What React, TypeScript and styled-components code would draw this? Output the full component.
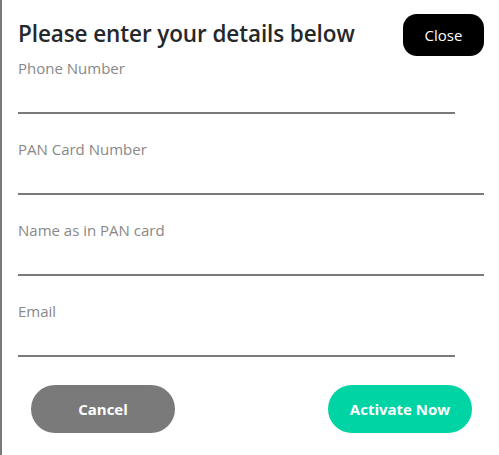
import React from 'react';
import styled, { createGlobalStyle } from 'styled-components';

const GlobalStyle = createGlobalStyle`
  html, body {
    margin: 0;
    padding: 0;
    background: #ffffff;
  }
  body {
    font-family: "Segoe UI", "Open Sans", "Noto Sans", sans-serif;
  }
`;

const Dialog = styled.div`
  box-sizing: border-box;
  width: 499px;
  height: 455px;
  border-left: 2px solid #7a7a7a;
  padding: 14px 15px 0 16px;
  background: #fff;
`;

const Header = styled.div`
  display: flex;
  align-items: center;
  justify-content: space-between;
  height: 42px;
`;

const Title = styled.h2`
  margin: 0 0 4px 0;
  font-size: 22.5px;
  font-weight: 600;
  color: #25282b;
  letter-spacing: -0.1px;
`;

const CloseButton = styled.button`
  width: 81px;
  height: 42px;
  border: none;
  border-radius: 14px;
  background: #000;
  color: #fff;
  font-family: inherit;
  font-size: 15px;
  padding: 0;
  cursor: pointer;
`;

const Form = styled.div`
  display: flex;
  flex-direction: column;
  gap: 25px;
  margin-top: 2px;
`;

const Field = styled.label<{ $wide?: boolean }>`
  display: flex;
  flex-direction: column;
  width: ${p => (p.$wide ? '466px' : '437px')};
`;

const Label = styled.span`
  font-size: 15px;
  line-height: 20px;
  color: #888888;
`;

const Input = styled.input`
  box-sizing: border-box;
  height: 36px;
  border: none;
  border-bottom: 2px solid #7a7a7a;
  outline: none;
  background: transparent;
  font-family: inherit;
  font-size: 15px;
  padding: 0;
`;

const Actions = styled.div`
  display: flex;
  justify-content: space-between;
  padding: 0 12px 0 13px;
  margin-top: 28px;
`;

const PillButton = styled.button<{ $tone: 'grey' | 'green' }>`
  width: 144px;
  height: 48px;
  border: none;
  border-radius: 24px;
  background: ${p => (p.$tone === 'green' ? '#00d3a4' : '#7a7a7a')};
  color: #fff;
  font-family: inherit;
  font-size: 15px;
  font-weight: 700;
  cursor: pointer;
`;

const fields = [
  { label: 'Phone Number', wide: false },
  { label: 'PAN Card Number', wide: true },
  { label: 'Name as in PAN card', wide: true },
  { label: 'Email', wide: false },
];

export default function App() {
  return (
    <>
      <GlobalStyle />
      <Dialog>
        <Header>
          <Title>Please enter your details below</Title>
          <CloseButton>Close</CloseButton>
        </Header>
        <Form>
          {fields.map(f => (
            <Field key={f.label} $wide={f.wide}>
              <Label>{f.label}</Label>
              <Input type="text" />
            </Field>
          ))}
        </Form>
        <Actions>
          <PillButton $tone="grey">Cancel</PillButton>
          <PillButton $tone="green">Activate Now</PillButton>
        </Actions>
      </Dialog>
    </>
  );
}
